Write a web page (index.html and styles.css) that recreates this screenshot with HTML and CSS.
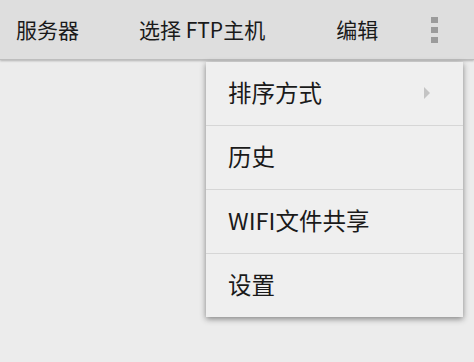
FILE: index.html
```html
<!DOCTYPE html>
<html lang="zh">
<head>
<meta charset="utf-8">
<link rel="stylesheet" href="styles.css">
</head>
<body>
<div class="app">
  <header class="bar">
    <span class="tab t1">服务器</span>
    <span class="tab t2">选择 FTP主机</span>
    <span class="tab t3">编辑</span>
    <span class="more"><i></i><i></i><i></i></span>
  </header>
  <main class="content"></main>
  <ul class="menu">
    <li class="item">排序方式<span class="arrow"></span></li>
    <li class="item">历史</li>
    <li class="item">WIFI文件共享</li>
    <li class="item">设置</li>
  </ul>
</div>
</body>
</html>
```
FILE: styles.css
```css
html, body { margin: 0; padding: 0; }
body {
  width: 474px; height: 362px; overflow: hidden;
  background: #ececec;
  font-family: "Noto Sans CJK SC", "Roboto", sans-serif;
  color: #1a1a1a;
}
.app { position: relative; width: 474px; height: 362px; }
.bar {
  height: 59px;
  background: #dedede;
  display: flex; align-items: center;
  border-bottom: 1px solid #bdbdbd;
  box-shadow: 0 1px 2px rgba(0,0,0,0.25);
  font-size: 21px;
}
.tab { line-height: 1; }
.t1 { margin-left: 16px; }
.t2 { margin-left: 60px; }
.t3 { margin-left: 71px; }
.more {
  margin-left: 53px;
  display: flex; flex-direction: column; gap: 4px;
}
.more i { display: block; width: 7px; height: 6px; background: #9b9b9b; }
.menu {
  position: absolute; left: 206px; top: 62px; width: 257px;
  margin: 0; padding: 0; list-style: none;
  background: #efefef;
  box-shadow: 0 2px 6px rgba(0,0,0,0.45);
}
.item {
  height: 60px;
  padding-bottom: 3px;
  display: flex; align-items: center;
  padding-left: 22px;
  font-size: 23.5px;
  border-top: 1px solid #d6d6d6;
  position: relative;
}
.item:first-child { border-top: none; }
.arrow {
  position: absolute; left: 218px; top: 25px;
  width: 0; height: 0;
  border-left: 6px solid #c4c4c4;
  border-top: 6px solid transparent;
  border-bottom: 6px solid transparent;
}
```
